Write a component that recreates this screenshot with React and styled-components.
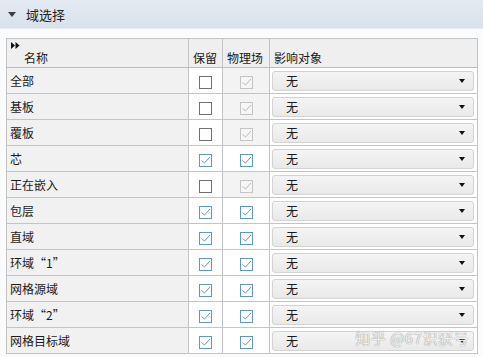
import React from 'react';
import styled, { createGlobalStyle, css } from 'styled-components';

const GlobalStyle = createGlobalStyle`
  body {
    margin: 0;
    background: #fafbfd;
    font-family: "Noto Sans CJK SC", "Liberation Sans", sans-serif;
    font-size: 12px;
    color: #1a1a1a;
  }
`;

const Page = styled.div`
  position: relative;
  width: 483px;
  height: 357px;
  overflow: hidden;
`;

const SectionBar = styled.div`
  height: 28px;
  display: flex;
  align-items: center;
  gap: 10px;
  padding-left: 8px;
  background: linear-gradient(#e4eaf2, #d9e1ec);
  border-bottom: 1px solid #e8edf3;
  font-size: 13px;
  color: #222;
`;

const Caret = styled.span`
  width: 0;
  height: 0;
  border-left: 4px solid transparent;
  border-right: 4px solid transparent;
  border-top: 5px solid #3a3f46;
`;

const Body = styled.div`
  padding: 9px 5px 0 6px;
`;

const Table = styled.table`
  border-collapse: collapse;
  width: 472px;
  table-layout: fixed;
  border: 1px solid #c4c4c4;
  background: #fff;
`;

const Th = styled.th`
  height: 27px;
  padding: 0 4px 1px;
  text-align: left;
  vertical-align: bottom;
  font-weight: normal;
  background: #efefef;
  border: 1px solid #c4c4c4;
  border-bottom-color: #bdbdbd;
  line-height: 16px;
`;

const NameHead = styled(Th)`
  position: relative;
  padding-left: 17px;
`;

const Expand = styled.svg`
  position: absolute;
  left: 4px;
  top: 3px;
`;

const Td = styled.td`
  height: 25px;
  padding: 0;
  border: 1px solid #c4c4c4;
  background: ${p => (p.$muted ? '#f3f3f3' : '#fff')};
`;

const NameCell = styled(Td)`
  padding-left: 3px;
  background: #f1f1f1;
  white-space: nowrap;
`;

const BoxCell = styled(Td)`
  text-align: center;
  vertical-align: middle;
`;

const Box = styled.span`
  display: inline-block;
  vertical-align: middle;
  width: 13px;
  height: 13px;
  box-sizing: border-box;
  border: 1px solid #707070;
  background: #fff;
  ${p => p.$checked && css`
    border-color: #5f97bd;
  `}
  ${p => p.$disabled && css`
    border-color: #c4c4c4;
    background: #f6f6f6;
  `}
`;

const Select = styled.div`
  margin: 0 3px 0 2px;
  height: 20px;
  box-sizing: border-box;
  display: flex;
  align-items: center;
  justify-content: space-between;
  padding: 0 8px 0 13px;
  border: 1px solid #d3d3d3;
  border-radius: 3px;
  background: linear-gradient(#f4f4f4, #e9e9e9);
`;

const Arrow = styled.span`
  width: 0;
  height: 0;
  border-left: 3.5px solid transparent;
  border-right: 3.5px solid transparent;
  border-top: 4px solid #111;
`;

const Watermark = styled.div`
  position: absolute;
  right: 14px;
  bottom: 9px;
  font-size: 15px;
  color: rgba(255, 255, 255, 0.85);
  text-shadow: 0 0 1px #9a9a9a, 0 0 1px #9a9a9a;
  letter-spacing: 0.5px;
`;

function Check({ checked, disabled }) {
  const color = disabled ? '#b9b9b9' : '#5f97bd';
  return (
    <Box $checked={checked} $disabled={disabled}>
      {(checked || disabled) && (
        <svg width="11" height="11" viewBox="0 0 11 11" style={{ display: 'block' }}>
          <path d="M1.5 5.5 L4.5 8 L10 2" fill="none" stroke={color} strokeWidth="1" />
        </svg>
      )}
    </Box>
  );
}

const rows = [
  { name: '全部', keep: false, phys: 'off' },
  { name: '基板', keep: false, phys: 'off' },
  { name: '覆板', keep: false, phys: 'off' },
  { name: '芯', keep: true, phys: 'on' },
  { name: '正在嵌入', keep: false, phys: 'off' },
  { name: '包层', keep: true, phys: 'on' },
  { name: '直域', keep: true, phys: 'on' },
  { name: '环域“1”', keep: true, phys: 'on' },
  { name: '网格源域', keep: true, phys: 'on' },
  { name: '环域“2”', keep: true, phys: 'on' },
  { name: '网格目标域', keep: true, phys: 'on' },
];

export default function App() {
  return (
    <Page>
      <GlobalStyle />
      <SectionBar>
        <Caret />
        <span>域选择</span>
      </SectionBar>
      <Body>
        <Table>
          <colgroup>
            <col style={{ width: 182 }} />
            <col style={{ width: 34 }} />
            <col style={{ width: 47 }} />
            <col />
          </colgroup>
          <thead>
            <tr>
              <NameHead>
                <Expand width="9" height="7" viewBox="0 0 9 7">
                  <path d="M0 0 L4 3.5 L0 7 Z M4.5 0 L8.5 3.5 L4.5 7 Z" fill="#111" />
                </Expand>
                名称
              </NameHead>
              <Th>保留</Th>
              <Th>物理场</Th>
              <Th>影响对象</Th>
            </tr>
          </thead>
          <tbody>
            {rows.map(r => (
              <tr key={r.name}>
                <NameCell>{r.name}</NameCell>
                <BoxCell>
                  <Check checked={r.keep} />
                </BoxCell>
                <BoxCell $muted={r.phys === 'off'}>
                  <Check checked={r.phys === 'on'} disabled={r.phys === 'off'} />
                </BoxCell>
                <Td>
                  <Select>
                    <span>无</span>
                    <Arrow />
                  </Select>
                </Td>
              </tr>
            ))}
          </tbody>
        </Table>
      </Body>
      <Watermark>知乎 @67识获号</Watermark>
    </Page>
  );
}
